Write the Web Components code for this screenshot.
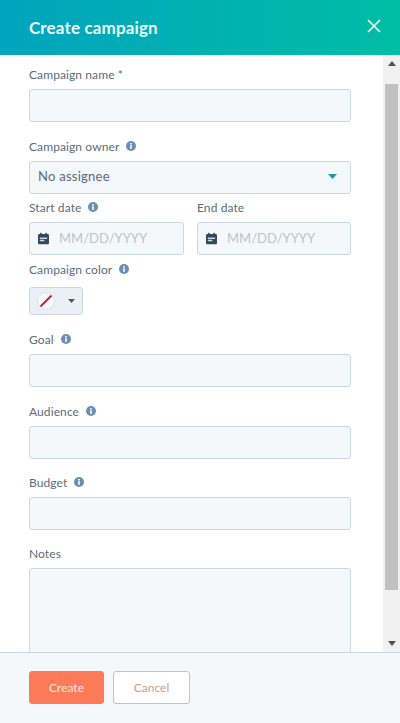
<!DOCTYPE html>
<html>
<head>
<meta charset="utf-8">
<style>
    html, body { margin: 0; height: 100%; }
    body { font-family: Lato, "Liberation Sans", sans-serif; background: #fff; overflow: hidden; }
</style>
</head>
<body>
<campaign-panel>
    <form-field label="Campaign name *" top="12"><text-box></text-box></form-field>
    <form-field label="Campaign owner" info top="17"><select-box value="No assignee"></select-box></form-field>
    <div style="display:grid;grid-template-columns:155px 154px;column-gap:13px">
        <form-field label="Start date" info top="6"><date-box></date-box></form-field>
        <form-field label="End date" top="6"><date-box></date-box></form-field>
    </div>
    <form-field label="Campaign color" info top="7" gap="10"><color-box></color-box></form-field>
    <form-field label="Goal" info top="17"><text-box></text-box></form-field>
    <form-field label="Audience" info top="17"><text-box></text-box></form-field>
    <form-field label="Budget" info top="16"><text-box></text-box></form-field>
    <form-field label="Notes" top="16"><text-box tall></text-box></form-field>
</campaign-panel>

<script>
const infoIcon = `<svg width="10" height="10" viewBox="0 0 10 10"><circle cx="5" cy="5" r="5" fill="#6a8fb5"/><rect x="4.2" y="4.2" width="1.6" height="3.6" fill="#fff"/><rect x="4.2" y="2" width="1.6" height="1.5" fill="#fff"/></svg>`;
const calendarIcon = `<svg width="11" height="13" viewBox="0 0 12 13"><rect x="2.2" y="0.3" width="1.6" height="3" rx=".6" fill="#33475b"/><rect x="8.2" y="0.3" width="1.6" height="3" rx=".6" fill="#33475b"/><path d="M1.5 1.6h9A1.5 1.5 0 0 1 12 3.1v8.2a1.5 1.5 0 0 1-1.5 1.5h-9A1.5 1.5 0 0 1 0 11.3V3.1A1.5 1.5 0 0 1 1.5 1.6z" fill="#33475b"/><path d="M2 5.4h8v1.6H2zM2 7.9h5v1.5H2z" fill="#cbd6e2"/></svg>`;

class CampaignPanel extends HTMLElement {
    constructor() {
        super();
        this.attachShadow({ mode: "open" });
        this.shadowRoot.innerHTML = `
        <style>
            :host { display: flex; flex-direction: column; width: 400px; height: 723px; color: #33475b; }
            .header {
                height: 55px; flex: none; box-sizing: border-box; padding: 0 19px 0 29px;
                display: flex; align-items: center; justify-content: space-between;
                background: linear-gradient(90deg, #00a4bd, #00bda5);
            }
            h1 { margin: 0; font-size: 17px; font-weight: 700; letter-spacing: .15px; color: #eafcfa; }
            .close { display: flex; margin-top: -4px; }
            .middle { flex: 1; display: flex; min-height: 0; }
            .scroll { flex: 1; overflow: hidden; padding: 0 32px 0 29px; min-width: 0; }
            .scrollbar { width: 17px; flex: none; background: #f1f1f1; display: flex; flex-direction: column; align-items: center; }
            .arrow { height: 17px; flex: none; display: flex; align-items: center; justify-content: center; }
            .spacer-top { height: 12px; flex: none; }
            .thumb { width: 13px; height: 506px; flex: none; background: #c1c1c1; }
            .fill { flex: 1; }
            .footer {
                height: 71px; flex: none; box-sizing: border-box; padding: 0 29px 1px; gap: 9px;
                display: flex; align-items: center;
                background: #f5f8fa; border-top: 1px solid #cbd6e2;
            }
            button {
                font: 400 12px Lato, "Liberation Sans", sans-serif; height: 33px; border-radius: 3px; padding: 0; box-sizing: border-box;
            }
            .create { width: 75px; background: #ff7a59; border: 1px solid #ff7a59; color: #fde6dc; }
            .cancel { width: 77px; background: #fff; border: 1px solid #e0b9a8; color: #c9a08f; }
        </style>
        <div class="header">
            <h1>Create campaign</h1>
            <span class="close"><svg width="14" height="14" viewBox="0 0 14 14"><path d="M1 1l12 12M13 1L1 13" stroke="#e6fbf8" stroke-width="1.7" fill="none"/></svg></span>
        </div>
        <div class="middle">
            <div class="scroll"><slot></slot></div>
            <div class="scrollbar">
                <div class="arrow"><svg width="8" height="5" viewBox="0 0 8 5"><path d="M4 0l4 5H0z" fill="#505050"/></svg></div>
                <div class="spacer-top"></div>
                <div class="thumb"></div>
                <div class="fill"></div>
                <div class="arrow"><svg width="8" height="5" viewBox="0 0 8 5"><path d="M0 0h8L4 5z" fill="#505050"/></svg></div>
            </div>
        </div>
        <div class="footer">
            <button class="create">Create</button>
            <button class="cancel">Cancel</button>
        </div>`;
    }
}

class FormField extends HTMLElement {
    constructor() {
        super();
        this.attachShadow({ mode: "open" });
    }
    connectedCallback() {
        const top = this.getAttribute("top") || 0;
        const gap = this.getAttribute("gap") || 7;
        this.shadowRoot.innerHTML = `
        <style>
            :host { display: block; padding-top: ${top}px; }
            .label { display: flex; align-items: center; gap: 7px; height: 15px; margin-bottom: ${gap}px; font-size: 12px; letter-spacing: .1px; color: #5a6b7c; white-space: nowrap; }
            .label svg { display: block; margin-top: -1px; }
        </style>
        <div class="label"><span>${this.getAttribute("label")}</span>${this.hasAttribute("info") ? infoIcon : ""}</div>
        <slot></slot>`;
    }
}

const boxStyle = `
    box-sizing: border-box; background: #f5f8fa; border: 1px solid #cbd6e2; border-radius: 3px;
`;

class TextBox extends HTMLElement {
    constructor() {
        super();
        this.attachShadow({ mode: "open" });
        this.shadowRoot.innerHTML = `
        <style>
            :host { display: block; ${boxStyle} height: 33px; }
            :host([tall]) { height: 120px; }
        </style>`;
    }
}

class SelectBox extends HTMLElement {
    constructor() {
        super();
        this.attachShadow({ mode: "open" });
    }
    connectedCallback() {
        this.shadowRoot.innerHTML = `
        <style>
            :host { display: flex; ${boxStyle} height: 33px; align-items: center; justify-content: space-between; padding: 0 13px 0 8px; font-size: 13px; letter-spacing: .25px; color: #5a6b7c; }
            span { margin-top: -3px; }
            svg { margin-top: -2px; }
        </style>
        <span>${this.getAttribute("value")}</span>
        <svg width="9" height="5" viewBox="0 0 9 5"><path d="M0 0h9L4.5 5z" fill="#1d9aa5"/></svg>`;
    }
}

class DateBox extends HTMLElement {
    constructor() {
        super();
        this.attachShadow({ mode: "open" });
        this.shadowRoot.innerHTML = `
        <style>
            :host { display: flex; ${boxStyle} height: 33px; align-items: center; gap: 10px; padding-left: 8px; font-size: 13px; color: #b9c4cf; white-space: nowrap; }
            svg { flex: none; margin-top: -1px; }
            span { margin-top: -1px; }
        </style>
        ${calendarIcon}<span>MM/DD/YYYY</span>`;
    }
}

class ColorBox extends HTMLElement {
    constructor() {
        super();
        this.attachShadow({ mode: "open" });
        this.shadowRoot.innerHTML = `
        <style>
            :host { display: flex; ${boxStyle} background: #eaf0f6; width: 54px; height: 28px; align-items: center; gap: 13px; padding-left: 7px; }
        </style>
        <svg width="18" height="18" viewBox="0 0 18 18"><circle cx="9" cy="9" r="8.4" fill="#f5f8fa" stroke="#dfe3eb"/><path d="M3.5 14.5L14.5 3.5" stroke="#c0233c" stroke-width="2"/></svg>
        <svg width="7" height="4" viewBox="0 0 7 4"><path d="M0 0h7L3.5 4z" fill="#425b76"/></svg>`;
    }
}

customElements.define("campaign-panel", CampaignPanel);
customElements.define("form-field", FormField);
customElements.define("text-box", TextBox);
customElements.define("select-box", SelectBox);
customElements.define("date-box", DateBox);
customElements.define("color-box", ColorBox);
</script>
</body>
</html>
